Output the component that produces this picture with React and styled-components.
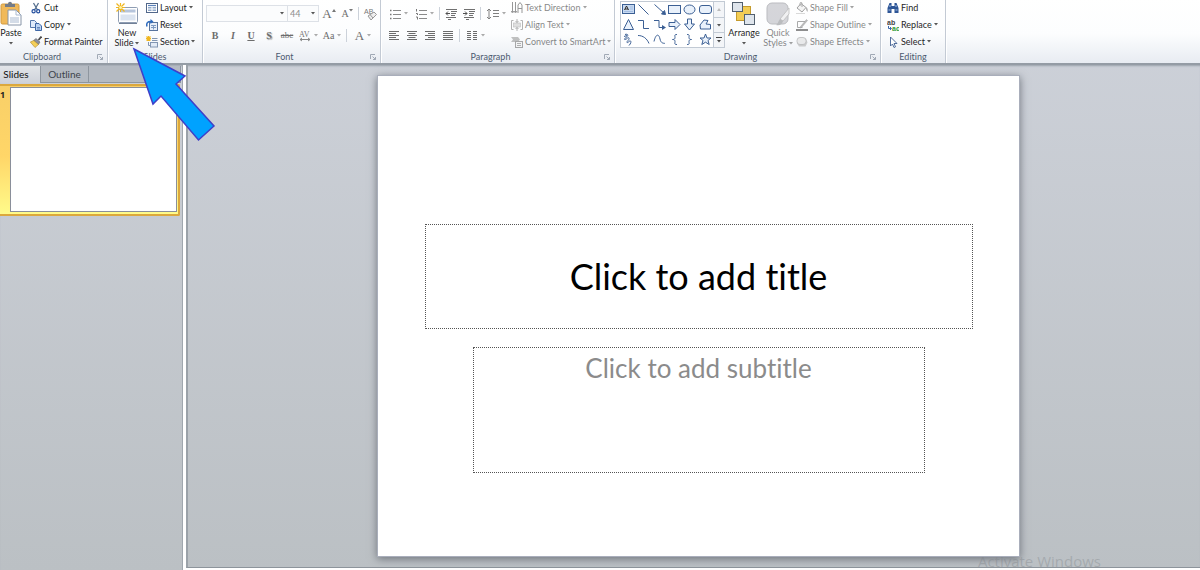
import React from 'react';
import styled, { createGlobalStyle, css } from 'styled-components';

const GlobalStyle = createGlobalStyle`
  * {
    box-sizing: border-box;
  }

  body {
    margin: 0;
    overflow: hidden;
    font-family: Lato, 'Open Sans', sans-serif;
    font-size: 9px;
    font-variant-ligatures: none;
    color: #1f1f1f;
  }

  button,
  select {
    margin: 0;
    padding: 0;
    border: 0;
    background: none;
    font: inherit;
    color: inherit;
  }

  svg {
    display: block;
    flex: none;
  }
`;

const Window = styled.div`
  position: relative;
  display: flex;
  flex-direction: column;
  height: 100vh;
  overflow: hidden;
  background: linear-gradient(#ced2da, #bbc0c4);
`;

/* ---------- ribbon ---------- */

const RibbonBar = styled.header`
  display: flex;
  flex: none;
  margin-top: -2px;
  background: linear-gradient(#ffffff 0%, #fcfdfe 55%, #e8ecf2 100%);
  border-bottom: 2px solid #949ca5;
`;

const Group = styled.section`
  display: flex;
  flex-direction: column;
  flex: none;
  width: ${(p) => p.$width}px;
  border-right: 1px solid #c3cad4;
  box-shadow: 1px 0 0 #ffffff;

  &:first-child {
    margin-left: -9px;
  }
`;

const GroupBody = styled.div`
  display: flex;
  height: 52px;
  padding-left: ${(p) => p.$pad || 4}px;
`;

const GroupFooter = styled.div`
  display: flex;
  align-items: center;
  height: 13px;
  color: #4c5a70;
`;

const GroupLabel = styled.span`
  flex: 1;
  text-align: center;
  line-height: 13px;
`;

const LauncherButton = styled.button`
  margin: 0 4px;
`;

const Column = styled.div`
  display: flex;
  flex-direction: column;
  padding-top: 1px;
  margin-left: ${(p) => p.$left || 0}px;
`;

const Command = styled.button`
  display: flex;
  align-items: center;
  gap: 2px;
  height: 17px;
  line-height: 17px;
  white-space: nowrap;
  opacity: ${(p) => (p.disabled ? 0.55 : 1)};
`;

const BigCommand = styled.button`
  display: flex;
  flex-direction: column;
  align-items: center;
  width: ${(p) => p.$width}px;
  padding-top: 3px;
  line-height: 10px;
  opacity: ${(p) => (p.disabled ? 0.55 : 1)};
`;

const BigText = styled.span`
  display: flex;
  align-items: center;
  justify-content: center;
  gap: 2px;
  min-height: 10px;
  white-space: nowrap;
`;

const ToolRows = styled.div`
  display: flex;
  flex-direction: column;
  gap: 5px;
  padding-top: 7px;
`;

const ToolRow = styled.div`
  display: flex;
  align-items: center;
  height: 17px;
`;

const Tool = styled.button`
  display: flex;
  align-items: center;
  justify-content: center;
  gap: 3px;
  width: ${(p) => p.$width || 18}px;
  height: 17px;
  font-family: 'Liberation Serif', serif;
  font-size: 10px;
  line-height: 17px;
  color: #6d6d6d;
  ${(p) => p.$bold && css`font-weight: 700;`}
  ${(p) => p.$italic && css`font-style: italic; font-weight: 700;`}
  ${(p) => p.$underline && css`text-decoration: underline; font-weight: 700;`}
  ${(p) => p.$shadow && css`font-weight: 700; text-shadow: 1px 1px 1px #999;`}
  ${(p) => p.$strike && css`text-decoration: line-through; font-size: 9px;`}
  ${(p) => p.$large && css`font-size: 13px;`}
  ${(p) => p.$raised && css`gap: 0; svg { align-self: flex-start; margin-top: 4px; }`}
`;

const Divider = styled.i`
  width: 1px;
  height: 13px;
  margin: 0 ${(p) => p.$gap || 2}px;
  background: #ccd2da;
`;

const Picker = styled.label`
  position: relative;
  display: block;
  width: ${(p) => p.$width}px;
  height: 17px;
  border: 1px solid #dde1e7;
  background: #fbfcfd;

  & + & {
    border-left: 0;
    margin-right: 1px;
  }

  select {
    display: block;
    width: 100%;
    height: 15px;
    padding-left: 2px;
    appearance: none;
    color: #8c8c8c;
    line-height: 15px;
  }

  svg {
    position: absolute;
    top: 6px;
    right: 3px;
    pointer-events: none;
  }
`;

const Gallery = styled.div`
  display: flex;
  margin-top: 3px;
  width: 105px;
  height: 47px;
  border: 1px solid #c2cad4;
  background: #fff;
`;

const ShapeGrid = styled.div`
  display: grid;
  flex: 1;
  grid-template-columns: repeat(6, 1fr);
  grid-template-rows: repeat(3, 1fr);
  place-items: center;
`;

const GalleryScroll = styled.div`
  display: grid;
  grid-template-rows: repeat(3, 1fr);
  width: 11px;
  border-left: 1px solid #c2cad4;

  button {
    display: grid;
    place-items: center;
    background: #f3f5f8;
  }

  button + button {
    border-top: 1px solid #c2cad4;
  }
`;

/* ---------- work area ---------- */

const Main = styled.div`
  display: flex;
  flex: 1;
  min-height: 0;
  box-shadow: inset 0 2px 2px -1px #9aa2ab;
`;

const Pane = styled.aside`
  width: 183px;
  flex: none;
  padding-top: 1px;
  border-right: 1px solid #a0a7ae;
`;

const Tabs = styled.div`
  display: flex;
  height: 17px;
  margin-right: 1px;
  background: #b4bac2;
  border-bottom: 1px solid #8e969f;
  border-right: 1px solid #8e969f;
`;

const Tab = styled.button`
  width: ${(p) => p.$width}px;
  height: ${(p) => (p.$active ? 17 : 16)}px;
  padding-right: ${(p) => (p.$active ? 8 : 0)}px;
  border-right: 1px solid #8e969f;
  background: ${(p) => (p.$active ? 'linear-gradient(#e2e5e9, #ced2da)' : 'transparent')};
  color: ${(p) => (p.$active ? '#111' : '#3d434b')};
  font-size: 10px;
  line-height: 15px;
`;

const SlideItem = styled.div`
  display: flex;
  gap: 5px;
  margin-top: 1px;
  width: 180px;
  height: 132px;
  padding: 1px 1px 2px 0;
  border: solid #dca83c;
  border-width: 2px 2px 2px 0;
  border-radius: 0 2px 2px 0;
  background: linear-gradient(#f8cf68, #ffd668 55%, #fffb8a);
`;

const SlideNumber = styled.span`
  width: 5px;
  padding-top: 1px;
  font-family: 'Open Sans', sans-serif;
  font-weight: 700;
  line-height: 14px;
`;

const Thumbnail = styled.div`
  flex: 1;
  border: 1px solid #8a8f9a;
  background: #fff;
`;

const Splitter = styled.div`
  width: 3px;
  flex: none;
  background: #fff;
`;

const Workspace = styled.main`
  display: flex;
  flex: 1;
  justify-content: center;
  align-items: flex-start;
  padding: 10px 0 0 9px;
  margin-bottom: 2px;
  border-left: 2px solid #9ba2a9;
  border-bottom: 1px solid #8d949b;
  box-shadow: 0 2px 0 #fff;
`;

const Slide = styled.article`
  display: flex;
  flex-direction: column;
  align-items: center;
  width: 643px;
  max-width: 96%;
  aspect-ratio: 4 / 3;
  padding-top: 148px;
  border: 1px solid #a9aebb;
  background: #fff;
  box-shadow: 0 2px 8px #70757d;
`;

const Placeholder = styled.div`
  display: flex;
  justify-content: center;
  border: 1px dotted #555;
`;

const TitleBox = styled(Placeholder)`
  align-items: center;
  width: 548px;
  max-width: 90%;
  height: 105px;
  padding-bottom: 2px;
  font-size: 36px;
  color: #000;
`;

const SubtitleBox = styled(Placeholder)`
  width: 452px;
  max-width: 80%;
  height: 126px;
  margin-top: 18px;
  padding-top: 5px;
  font-size: 26px;
  line-height: 30px;
  color: #8b8b8b;
`;

const Watermark = styled.div`
  position: absolute;
  right: 99px;
  bottom: 0;
  font-family: 'Open Sans', sans-serif;
  font-size: 15px;
  line-height: 18px;
  color: rgba(120, 125, 130, 0.35);
`;

const Pointer = styled.svg`
  position: absolute;
  top: 44px;
  left: 130px;
  pointer-events: none;
`;

/* ---------- icons ---------- */

const Caret = ({ color = '#555' }) => (
  <svg width="4" height="3" viewBox="0 0 4 3">
    <path d="M0 0h4L2 2.6z" fill={color} />
  </svg>
);

const PaleCaret = () => <Caret color="#aaa" />;

const Icon = ({ size = 12, children }) => (
  <svg width={size} height={size} viewBox="0 0 12 12" fill="none">
    {children}
  </svg>
);

const Launcher = () => (
  <LauncherButton aria-label="More options">
    <svg width="6" height="6" viewBox="0 0 6 6" fill="none" stroke="#a0a9b5">
      <path d="M.5 5V.5H5M2.5 2.5l3 3M5.5 3v2.5H3" />
    </svg>
  </LauncherButton>
);

const PasteIcon = () => (
  <svg width="22" height="27" viewBox="0 0 22 27">
    <rect x="1" y="3" width="18" height="20" rx="1.5" fill="#f0b95a" stroke="#d29b40" />
    <path d="M5 6V3h3c0-3 4-3 4 0h3v3z" fill="#747c88" />
    <path d="M8 9h8l5 5v10H8z" fill="#fff" stroke="#8895a8" />
    <path d="M16 9v5h5M10 17h9M10 19h9M10 21h9" stroke="#a9b9d0" fill="none" />
  </svg>
);

const CutIcon = () => (
  <Icon>
    <path d="M3.5 1l4 7M8.5 1l-4 7" stroke="#56708f" strokeWidth="1.3" />
    <circle cx="3.6" cy="9.2" r="1.6" stroke="#244f9e" strokeWidth="1.2" />
    <circle cx="8.2" cy="9.2" r="1.6" stroke="#244f9e" strokeWidth="1.2" />
  </Icon>
);

const CopyIcon = () => (
  <Icon>
    <path d="M.5 1.5h4l2 2v5h-6z" fill="#dfeafa" stroke="#5577aa" />
    <path d="M5.500 4.500h3.500l2.500 2.500v4.500h-6z" fill="#bcd3f2" stroke="#3d66a5" />
    <path d="M7 8.500h3M7 10h3" stroke="#3d66a5" strokeWidth=".7" />
  </Icon>
);

const BrushIcon = () => (
  <Icon>
    <path d="M11.500.5L8.500 4" stroke="#4a4a4a" strokeWidth="1.800" />
    <path d="M6 2.500l4 3.500-1.500 2.500-5-4z" fill="#8a8fa0" stroke="#555" strokeWidth=".5" />
    <path d="M3.700 4.500l4.800 4L5 11.500.3 6z" fill="#f4cf58" stroke="#ab8730" strokeWidth=".6" />
  </Icon>
);

const Spark = ({ x = 0, y = 0, r = 4 }) => (
  <path
    d={`M${x + r} ${y}v${2 * r}M${x} ${y + r}h${2 * r}M${x + 0.5} ${y + 0.5}l${2 * r - 1} ${2 * r - 1}M${x + 2 * r - 0.5} ${y + 0.5}l${1 - 2 * r} ${2 * r - 1}`}
    stroke="#f0b721"
    strokeWidth="1.2"
  />
);

const NewSlideIcon = () => (
  <svg width="24" height="27" viewBox="0 0 24 27" fill="none">
    <rect x="3.500" y="6.500" width="19" height="15" rx="1" fill="#fff" stroke="#8e9db3" />
    <rect x="5.500" y="8.500" width="15" height="3" fill="#b6c5dc" />
    <rect x="5.500" y="13.500" width="15" height="6" fill="#dbe4f0" />
    <path d="M4 22.500h18" stroke="#6f7f96" />
    <Spark x={1} y={2} r={4.5} />
    <circle cx="5.500" cy="6.500" r="1.500" fill="#fff3a6" />
  </svg>
);

const LayoutIcon = () => (
  <Icon>
    <rect x=".5" y="1.500" width="11" height="9" fill="#fff" stroke="#51678a" />
    <path d="M2 3.500h8" stroke="#5981bb" strokeWidth="1.200" />
    <path d="M2 5.500h3.500M2 7h3.500M2 8.500h3.500M6.500 5.500H10M6.500 7H10M6.500 8.500H10" stroke="#7694bd" strokeWidth=".8" />
  </Icon>
);

const ResetIcon = () => (
  <Icon>
    <rect x="3.500" y="3.500" width="8" height="8" fill="#e8eff9" stroke="#58749e" />
    <path d="M5 6.500h5M5 8.500h5M7.500 6v4.500" stroke="#7d9ac2" />
    <path d="M1 7.500C0 4 2 2 5.500 2.500" stroke="#2f6cbf" strokeWidth="1.500" />
    <path d="M4.500 0l3 2.500-3 2.500z" fill="#2f6cbf" />
  </Icon>
);

const SectionIcon = () => (
  <Icon>
    <Spark x={0} y={0} r={2.5} />
    <path d="M6 2.500h5.500M6 4.500h5.500" stroke="#8296b2" />
    <rect x="4.500" y="6.500" width="7" height="4.500" fill="#e3ebf6" stroke="#8296b2" />
    <path d="M2.500 6v3.500H4" stroke="#8296b2" />
  </Icon>
);

const EraserIcon = () => (
  <svg width="14" height="14" viewBox="0 0 14 14" fill="none">
    <text x="1" y="7" fontSize="7" fontFamily="Liberation Sans" fill="#777">AB</text>
    <path d="M5 9l6-4 2.500 2.500L8 13z" fill="#eee" stroke="#999" />
    <path d="M7 7.500l3 3.500" stroke="#999" />
  </svg>
);

const SpacingIcon = () => (
  <svg width="12" height="12" viewBox="0 0 12 12" fill="none" stroke="#888">
    <text x="0" y="7" fontSize="8" fontFamily="Liberation Serif" fill="#777" stroke="none">AV</text>
    <path d="M1 9.500h10M3 8L1 9.500 3 11M9 8l2 1.500L9 11" />
  </svg>
);

const BulletIcon = ({ numbered }) => (
  <Icon>
    {numbered ? (
      <path d="M1.500 1v2.500M1 5.500h1.500V7M1 9h1.500v2.500" stroke="#777" />
    ) : (
      <path d="M1 2.500h1.500M1 6.500h1.500M1 10.500h1.500" stroke="#777" strokeWidth="1.500" />
    )}
    <path d="M4 2.500h8M4 6.500h8M4 10.500h8" stroke="#8a8a8a" />
  </Icon>
);

const IndentIcon = ({ flip }) => (
  <Icon>
    <path d="M1 1.500h11M6 3.500h6M6 5.500h5M6 7.500h4M1 9.500h10M3 11.500h3" stroke="#707070" />
    <path d={flip ? 'M0 5.500h4M2 3.500l2 2-2 2' : 'M5 5.500H1M3 3.500l-2 2 2 2'} stroke="#505050" />
  </Icon>
);

const LineSpacingIcon = () => (
  <Icon>
    <path d="M2 1v10M0 3l2-2 2 2M0 9l2 2 2-2" stroke="#808080" />
    <path d="M6 2.500h6M6 5.500h6M6 8.500h6" stroke="#808080" />
  </Icon>
);

const alignLines = {
  left: 'M1 1.500h10M1 3.500h7M1 5.500h10M1 7.500h7M1 9.500h10',
  center: 'M1 1.500h10M2.500 3.500h7M1 5.500h10M2.500 7.500h7M1 9.500h10',
  right: 'M1 1.500h10M4 3.500h7M1 5.500h10M4 7.500h7M1 9.500h10',
  justify: 'M1 1.500h10M1 3.500h10M1 5.500h10M1 7.500h10M1 9.500h10',
  columns: 'M1 1.500h4M7 1.500h4M1 3.500h4M7 3.500h4M1 5.500h4M7 5.500h4M1 7.500h4M7 7.500h4M1 9.500h4M7 9.500h4',
};

const AlignIcon = ({ type }) => (
  <Icon>
    <path d={alignLines[type]} stroke="#6c6c6c" />
  </Icon>
);

const DirectionIcon = () => (
  <Icon>
    <path d="M1.500 0v10M4.500 0v10M0 9l1.500 2L3 9M3 9l1.500 2L6 9" stroke="#444" />
    <path d="M7 11V3l2-2.500L11 3v8M7 6.500h4" stroke="#444" />
  </Icon>
);

const AlignTextIcon = () => (
  <Icon>
    <path d="M2.500 1.500h-2v9h2M9.500 1.500h2v9h-2" stroke="#777" />
    <rect x="2.500" y="4" width="7" height="4" fill="#c9c9c9" stroke="#888" strokeWidth=".6" />
    <path d="M6 0v3.500M6 8.500V12M4.500 2L6 3.500 7.500 2M4.500 10L6 8.500 7.500 10" stroke="#555" strokeWidth=".8" />
  </Icon>
);

const SmartArtIcon = () => (
  <Icon>
    <path d="M0 1h7l2 2.500-2 2.500H0l2-2.500z" fill="#909090" />
    <rect x="4.500" y="5.500" width="7" height="6" fill="#f2f2f2" stroke="#666" />
    <path d="M6 7.500h4M6 9.500h4" stroke="#777" />
  </Icon>
);

const ArrangeIcon = () => (
  <svg width="24" height="27" viewBox="0 0 24 27">
    <rect x="4.500" y="5.500" width="14" height="14" fill="#f3cd55" stroke="#c59b2d" />
    <rect x=".5" y="1.500" width="10" height="9" fill="#dfe5ec" stroke="#52606f" />
    <rect x="12.500" y="13.500" width="10" height="10" fill="#dfe5ec" stroke="#52606f" />
  </svg>
);

const StylesIcon = () => (
  <svg width="24" height="27" viewBox="0 0 24 27">
    <rect x="1" y="2" width="21" height="21" rx="5" fill="#b4b5bc" stroke="#85878e" />
    <path d="M23 7v6l-6 7-3-2z" fill="#e6e6e8" stroke="#888" strokeWidth=".8" />
    <path d="M14 18l3 2c-1 4-4 5-7 4 2-1 2-4 4-6z" fill="#85878c" />
  </svg>
);

const FillIcon = () => (
  <Icon>
    <path d="M5 1.500l5 4-4 4.500-5-4z" fill="#ececec" stroke="#555" />
    <path d="M4 4V1.500C4 0 6 0 6 1.500V5" stroke="#666" />
    <path d="M10 5c2 1 2 3 1.500 5-1-1-2-3-1.500-5z" fill="#777" />
    <path d="M0 11.500h9" stroke="#bbb" />
  </Icon>
);

const OutlineIcon = () => (
  <Icon>
    <path d="M9 2.500H1.500v6h5" stroke="#666" />
    <path d="M11.500 1.500l-6 7-1.500.5.500-1.500 6-7z" fill="#888" stroke="#555" strokeWidth=".5" />
    <path d="M0 11h12" stroke="#333" strokeWidth="2" />
  </Icon>
);

const EffectsIcon = () => (
  <Icon>
    <path d="M3 2.500h7l1.500 4-2 4H3L.8 7z" fill="#aaa" />
    <rect x="1" y="1.500" width="9" height="7" rx="3" fill="#ddd" stroke="#888" strokeWidth=".8" />
  </Icon>
);

const FindIcon = () => (
  <Icon>
    <path d="M2.500 1h2v3h3V1h2l2 5v5h-4V7h-3v4h-4V6z" fill="#2d5596" />
    <path d="M1.500 8h2M8.500 8h2M3 3v2M9 3v2" stroke="#a7c0e4" />
  </Icon>
);

const ReplaceIcon = () => (
  <svg width="12" height="12" viewBox="0 0 12 12" fill="none" fontFamily="Liberation Sans" fontWeight="700">
    <text x="0" y="6" fontSize="7" fill="#444">ab</text>
    <text x="5" y="12" fontSize="7" fill="#2d9a36">ac</text>
    <path d="M1.500 7v2.500H4M3 8l1.500 1.500L3 11" stroke="#3b66ac" />
  </svg>
);

const SelectIcon = () => (
  <Icon>
    <path d="M3.500 1v9l2-2 1.500 3.500 1.500-.7L7 7.500h3z" fill="#fff" stroke="#3f5f92" strokeWidth=".9" />
  </Icon>
);

const shapes = [
  ['Text box', <><rect x=".5" y="1.500" width="12" height="9" fill="#c8daf1" stroke="#3b5f94" /><path d="M2.500 7L4.500 3l2 4M3 6h3" stroke="#222" /><path d="M8 4h3M8 6h3M2 8.500h9" stroke="#a3bde2" /></>],
  ['Line', <path d="M1.500 1.500l10 10" />],
  ['Arrow', <><path d="M1.500 1.500l10 9" /><path d="M12.500 11.500l-1-4-3 3.500z" fill="#3b5f94" /></>],
  ['Rectangle', <rect x=".5" y="2.500" width="12" height="8" />],
  ['Oval', <ellipse cx="6.500" cy="6.500" rx="5.500" ry="4.500" />],
  ['Rounded rectangle', <rect x=".5" y="2.500" width="12" height="8" rx="2.500" />],
  ['Triangle', <path d="M6.500 1.500l5 10h-10z" />],
  ['Elbow', <path d="M1 2.500h5.500v8H12" fill="none" />],
  ['Elbow arrow', <><path d="M1 2.500h5v7h4" fill="none" /><path d="M9 7l4 2.500L9 12z" fill="#3b5f94" stroke="none" /></>],
  ['Right arrow', <path d="M1 4.500h6V1.500l5 5-5 5V8.500H1z" />],
  ['Down arrow', <path d="M4.500 1h4v5h3l-5 6-5-6h3z" />],
  ['Freeform', <path d="M1.500 11L1 7l4-5 4 .5-2 3.500 4.500.5V11z" />],
  ['Scribble', <path d="M3 1.500c3-1 4 1 1 3s-1 3 1 1 3 0 1 2-1 3 1 1 3 1 0 4M2 3.500l3-1" fill="none" />],
  ['Arc', <path d="M1 2.500c5 0 9 3 11 8" fill="none" />],
  ['Curve', <path d="M1 8.500C3 0 6 1 7 6s4 4 5 4.500" fill="none" />],
  ['Left brace', <path d="M9 1.500c-3 0-2 1-2 3 0 1.500-1 2-2.500 2 1.500 0 2.500.5 2.500 2 0 2-1 3 2 3" fill="none" />],
  ['Right brace', <path d="M4 1.500c3 0 2 1 2 3 0 1.500 1 2 2.500 2-1.500 0-2.500.5-2.500 2 0 2 1 3-2 3" fill="none" />],
  ['Star', <path d="M6.500 1l1.500 4h4L9 7.500l1.200 4-3.700-2.300-3.700 2.300L4 7.500 1 5h4z" />],
];

/* ---------- page ---------- */

const RibbonGroup = ({ label, width, pad, launcher, children }) => (
  <Group $width={width} aria-label={label}>
    <GroupBody $pad={pad}>{children}</GroupBody>
    <GroupFooter>
      <GroupLabel>{label}</GroupLabel>
      {launcher && <Launcher />}
    </GroupFooter>
  </Group>
);

const RibbonCommand = ({ icon, text, menu, disabled }) => (
  <Command disabled={disabled}>
    {icon}
    <span>{text}</span>
    {menu && <Caret />}
  </Command>
);

const Ribbon = () => (
  <RibbonBar>
    <RibbonGroup label="Clipboard" width={117} pad={9} launcher>
      <BigCommand $width={22}>
        <PasteIcon />
        <BigText>Paste</BigText>
        <BigText><Caret /></BigText>
      </BigCommand>
      <Column $left={8}>
        <RibbonCommand icon={<CutIcon />} text="Cut" />
        <RibbonCommand icon={<CopyIcon />} text="Copy" menu />
        <RibbonCommand icon={<BrushIcon />} text="Format Painter" />
      </Column>
    </RibbonGroup>

    <RibbonGroup label="Slides" width={95} pad={5}>
      <BigCommand $width={28}>
        <NewSlideIcon />
        <BigText>New</BigText>
        <BigText>Slide <Caret /></BigText>
      </BigCommand>
      <Column $left={5}>
        <RibbonCommand icon={<LayoutIcon />} text="Layout" menu />
        <RibbonCommand icon={<ResetIcon />} text="Reset" />
        <RibbonCommand icon={<SectionIcon />} text="Section" menu />
      </Column>
    </RibbonGroup>

    <RibbonGroup label="Font" width={178} pad={3} launcher>
      <ToolRows>
        <ToolRow>
          <Picker $width={82}>
            <select aria-label="Font name" defaultValue=""><option value="" /></select>
            <Caret />
          </Picker>
          <Picker $width={31}>
            <select aria-label="Font size" defaultValue="44"><option>44</option></select>
            <Caret />
          </Picker>
          <Tool $large $raised aria-label="Grow font">
            A<svg width="4" height="3"><path d="M0 3h4L2 0z" fill="#777" /></svg>
          </Tool>
          <Tool $raised aria-label="Shrink font">A<Caret color="#777" /></Tool>
          <Divider />
          <Tool aria-label="Clear formatting"><EraserIcon /></Tool>
        </ToolRow>
        <ToolRow>
          <Tool $bold>B</Tool>
          <Tool $italic>I</Tool>
          <Tool $underline>U</Tool>
          <Tool $shadow>S</Tool>
          <Tool $strike>abc</Tool>
          <Tool $width={24} aria-label="Character spacing"><SpacingIcon /><PaleCaret /></Tool>
          <Tool $width={24}>Aa<PaleCaret /></Tool>
          <Divider />
          <Tool $width={28} $large aria-label="Font color">A<PaleCaret /></Tool>
        </ToolRow>
      </ToolRows>
    </RibbonGroup>

    <RibbonGroup label="Paragraph" width={234} pad={4} launcher>
      <ToolRows>
        <ToolRow>
          <Tool $width={26} aria-label="Bullets"><BulletIcon /><PaleCaret /></Tool>
          <Tool $width={26} aria-label="Numbering"><BulletIcon numbered /><PaleCaret /></Tool>
          <Divider />
          <Tool aria-label="Decrease indent"><IndentIcon /></Tool>
          <Tool aria-label="Increase indent"><IndentIcon flip /></Tool>
          <Divider />
          <Tool $width={26} aria-label="Line spacing"><LineSpacingIcon /><PaleCaret /></Tool>
        </ToolRow>
        <ToolRow>
          <Tool aria-label="Align left"><AlignIcon type="left" /></Tool>
          <Tool aria-label="Center"><AlignIcon type="center" /></Tool>
          <Tool aria-label="Align right"><AlignIcon type="right" /></Tool>
          <Tool aria-label="Justify"><AlignIcon type="justify" /></Tool>
          <Divider />
          <Tool $width={26} aria-label="Columns"><AlignIcon type="columns" /><PaleCaret /></Tool>
        </ToolRow>
      </ToolRows>
      <Column $left={2}>
        <RibbonCommand icon={<DirectionIcon />} text="Text Direction" menu disabled />
        <RibbonCommand icon={<AlignTextIcon />} text="Align Text" menu disabled />
        <RibbonCommand icon={<SmartArtIcon />} text="Convert to SmartArt" menu disabled />
      </Column>
    </RibbonGroup>

    <RibbonGroup label="Drawing" width={266} pad={5} launcher>
      <Gallery>
        <ShapeGrid>
          {shapes.map(([name, drawing]) => (
            <button key={name} aria-label={name}>
              <svg width="13" height="13" viewBox="0 0 13 13" fill="#e9f1fb" stroke="#3b5f94">
                {drawing}
              </svg>
            </button>
          ))}
        </ShapeGrid>
        <GalleryScroll>
          <button aria-label="Previous shapes"><svg width="4" height="3"><path d="M0 3h4L2 0z" fill="#bbb" /></svg></button>
          <button aria-label="Next shapes"><Caret /></button>
          <button aria-label="All shapes">
            <svg width="6" height="6"><path d="M0 .5h6" stroke="#444" /><path d="M1 3h4L3 5.500z" fill="#444" /></svg>
          </button>
        </GalleryScroll>
      </Gallery>
      <BigCommand $width={38}>
        <ArrangeIcon />
        <BigText>Arrange</BigText>
        <BigText><Caret /></BigText>
      </BigCommand>
      <BigCommand $width={30} disabled>
        <StylesIcon />
        <BigText>Quick</BigText>
        <BigText>Styles <Caret /></BigText>
      </BigCommand>
      <Column $left={3}>
        <RibbonCommand icon={<FillIcon />} text="Shape Fill" menu disabled />
        <RibbonCommand icon={<OutlineIcon />} text="Shape Outline" menu disabled />
        <RibbonCommand icon={<EffectsIcon />} text="Shape Effects" menu disabled />
      </Column>
    </RibbonGroup>

    <RibbonGroup label="Editing" width={65} pad={6}>
      <Column>
        <RibbonCommand icon={<FindIcon />} text="Find" />
        <RibbonCommand icon={<ReplaceIcon />} text="Replace" menu />
        <RibbonCommand icon={<SelectIcon />} text="Select" menu />
      </Column>
    </RibbonGroup>
  </RibbonBar>
);

const App = () => (
  <Window>
    <GlobalStyle />
    <Ribbon />
    <Main>
      <Pane>
        <Tabs>
          <Tab $width={41} $active>Slides</Tab>
          <Tab $width={48}>Outline</Tab>
        </Tabs>
        <SlideItem>
          <SlideNumber>1</SlideNumber>
          <Thumbnail />
        </SlideItem>
      </Pane>
      <Splitter />
      <Workspace>
        <Slide>
          <TitleBox>Click to add title</TitleBox>
          <SubtitleBox>Click to add subtitle</SubtitleBox>
        </Slide>
      </Workspace>
    </Main>
    <Watermark>Activate Windows</Watermark>
    <Pointer width="90" height="100" viewBox="130 44 90 100">
      <path
        d="M134 49l51 27-9 8 38 42-15.500 14L161 96l-8 8z"
        fill="#00a2ff"
        stroke="#3f3fc8"
        strokeWidth="1.500"
      />
    </Pointer>
  </Window>
);

export default App;
